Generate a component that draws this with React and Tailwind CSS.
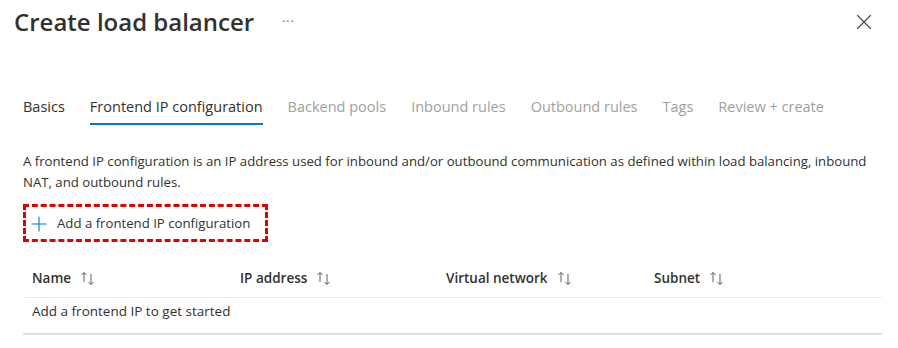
import { X, Plus } from "lucide-react";

const tabs = ["Basics", "Frontend IP configuration", "Backend pools", "Inbound rules", "Outbound rules", "Tags", "Review + create"];
const cols = ["Name", "IP address", "Virtual network", "Subnet"];

function SortIcon() {
  return (
    <svg width="16" height="15" viewBox="0 0 16 15" className="ml-[9px] text-[#605e5c]" fill="none" stroke="currentColor" strokeWidth="1">
      <path d="M4 11V1.5M1.5 4l2.5-2.5 2.5 2.5" />
      <path d="M11 3v10.5M8.5 11l2.5 2.5 2.5-2.5" />
    </svg>
  );
}

export default function App() {
  return (
    <div className="h-[348px] w-[898px] bg-white font-['Open_Sans',sans-serif] text-[#323130]">
      <div className="flex items-start justify-between pl-[14px] pr-[21px] pt-[5px]">
        <div className="flex items-center">
          <h1 className="text-[24px] font-semibold leading-[34px]">Create load balancer</h1>
          <span className="ml-[28px] text-[12px] tracking-[1px] text-[#605e5c]">···</span>
        </div>
        <X className="mt-[4px] h-[26px] w-[26px] text-[#484644]" strokeWidth={1} />
      </div>

      <div className="mt-[57px] flex gap-[25px] px-[23px] text-[14.5px]">
        {tabs.map((t, i) => (
          <div
            key={t}
            className={
              i === 1
                ? "border-b-2 border-[#0078d4] pb-[5px] text-[#323130]"
                : i === 0
                ? "pb-[5px] text-[#323130]"
                : "pb-[5px] text-[#a19f9d]"
            }
          >
            {t}
          </div>
        ))}
      </div>

      <p className="mt-[26px] px-[23px] text-[13.2px] leading-[21px]">
        A frontend IP configuration is an IP address used for inbound and/or outbound communication as defined within load balancing, inbound NAT, and outbound rules.
      </p>

      <div className="mt-[11px] px-[23px]">
        <div className="inline-flex h-[38px] w-[245px] items-center border-[3px] border-dashed border-[#e00000] pl-[1px] pt-[2px] text-[13.2px]">
          <Plus className="h-[24px] w-[24px] text-[#0078d4]" strokeWidth={1.1} />
          <span className="ml-[6px]">Add a frontend IP configuration</span>
        </div>
      </div>

      <div className="ml-[23px] mr-[16px] mt-[18px]">
        <div className="grid h-[38px] grid-cols-[208px_206px_208px_1fr] items-center border-b border-[#edebe9] px-[9px] text-[13.5px] font-semibold">
          {cols.map((c) => (
            <div key={c} className="flex items-center">
              {c}
              <SortIcon />
            </div>
          ))}
        </div>
        <div className="h-[37px] border-b-2 border-[#e1dfdd] px-[9px] pt-[3px] text-[13.5px] leading-[20px]">
          Add a frontend IP to get started
        </div>
      </div>
    </div>
  );
}
